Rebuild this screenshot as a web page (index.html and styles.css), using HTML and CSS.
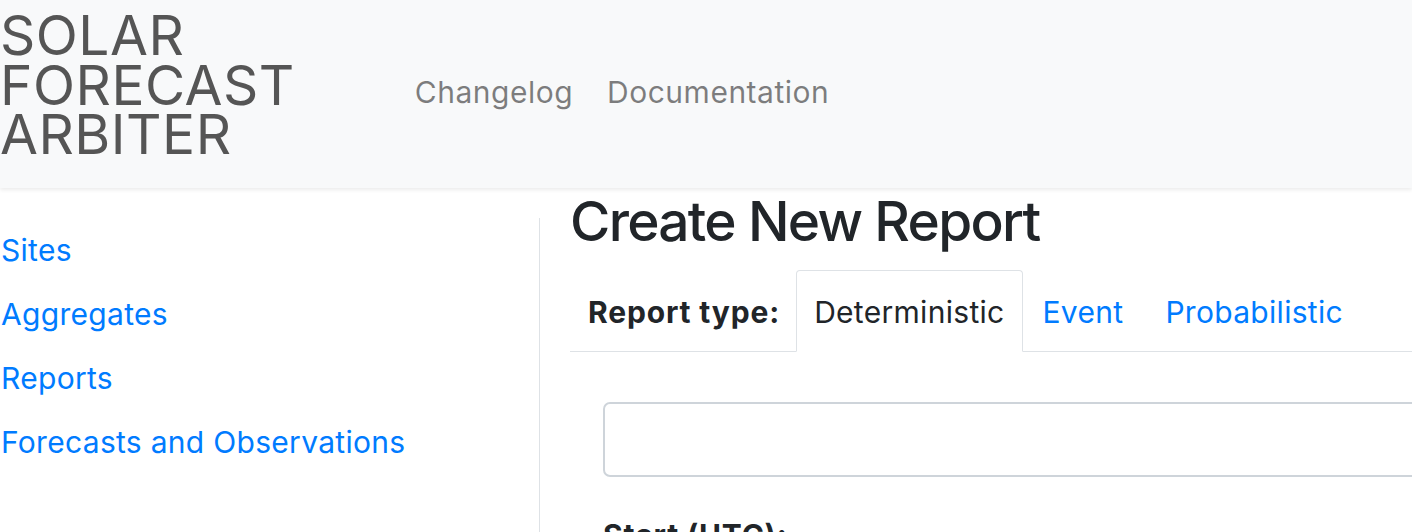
FILE: index.html
```html
<!DOCTYPE html>
<html lang="en">
<head>
    <meta charset="UTF-8">
    <meta name="viewport" content="width=device-width, initial-scale=1.0">
    <title>Solar Forecast Arbiter - Create New Report</title>
    <link rel="stylesheet" href="styles.css">
</head>
<body>
    <nav class="navbar">
        <a class="brand" href="#">SOLAR<br>FORECAST<br>ARBITER</a>
        <div class="nav-links">
            <a class="nav-link" href="#">Changelog</a>
            <a class="nav-link" href="#">Documentation</a>
        </div>
    </nav>
    <div class="page">
        <aside class="sidebar">
            <a class="side-link" href="#">Sites</a>
            <a class="side-link" href="#">Aggregates</a>
            <a class="side-link" href="#">Reports</a>
            <a class="side-link" href="#">Forecasts and Observations</a>
        </aside>
        <main class="content">
            <h2>Create New Report</h2>
            <ul class="tabs">
                <li class="tab-label">Report type:</li>
                <li><a class="tab active" href="#">Deterministic</a></li>
                <li><a class="tab" href="#">Event</a></li>
                <li><a class="tab" href="#">Probabilistic</a></li>
            </ul>
            <form class="report-form">
                <input type="text" class="form-control" aria-label="Report name">
                <label class="form-label">Start (UTC):</label>
            </form>
        </main>
    </div>
</body>
</html>
```

FILE: styles.css
```css
* {
    margin: 0;
    padding: 0;
    box-sizing: border-box;
}
body {
    font-family: Inter, "Noto Sans", Arial, sans-serif;
    font-size: 30px;
    line-height: 1.5;
    letter-spacing: 0.3px;
    color: #212529;
    background-color: #fff;
    overflow: hidden;
}
a {
    text-decoration: none;
}
.navbar {
    display: flex;
    align-items: center;
    height: 188px;
    background-color: #f8f9fa;
    box-shadow: 0 2px 4px rgba(0,0,0,0.08);
    position: relative;
    z-index: 1;
}
.brand {
    align-self: flex-start;
    padding-top: 11px;
    font-size: 55px;
    line-height: 49.5px;
    color: #555;
    letter-spacing: 0.5px;
}
.nav-links {
    display: flex;
    margin-left: 103px;
    margin-top: -4px;
}
.nav-link {
    color: rgba(0,0,0,0.5);
    padding: 0 17px;
    letter-spacing: 0.5px;
}
.page {
    display: flex;
}
.sidebar {
    display: flex;
    flex-direction: column;
    width: 540px;
    flex-shrink: 0;
    margin-top: 30px;
    min-height: 400px;
    border-right: 1px solid #dee2e6;
}
.side-link {
    color: #007bff;
    padding: 10px 1px 9px;
}
.content {
    padding-left: 30px;
    flex-grow: 1;
}
h2 {
    font-size: 55px;
    font-weight: 500;
    line-height: 1.2;
    letter-spacing: -1.7px;
    margin-bottom: 16px;
}
.tabs {
    list-style: none;
    display: flex;
    border-bottom: 1px solid #dee2e6;
    width: 900px;
}
.tab-label {
    font-weight: 700;
    letter-spacing: 0.85px;
    padding: 20px 16px 16px 18px;
    color: #212529;
}
.tab {
    display: block;
    padding: 19px 21px 16px 19px;
    border: 1px solid transparent;
    border-radius: 4px 4px 0 0;
    margin-bottom: -1px;
    color: #007bff;
}
.tab.active {
    padding: 19px 17px 16px;
    color: #212529;
    background-color: #fff;
    border-color: #dee2e6 #dee2e6 #fff;
}
.report-form {
    padding: 50px 0 0 33px;
}
.form-control {
    display: block;
    width: 900px;
    height: 75px;
    border: 2px solid #ced4da;
    border-radius: 7px;
    font-size: 30px;
    padding: 10px 20px;
    margin-bottom: 36px;
}
.form-label {
    display: block;
    font-weight: 700;
    letter-spacing: 0.8px;
}
```
